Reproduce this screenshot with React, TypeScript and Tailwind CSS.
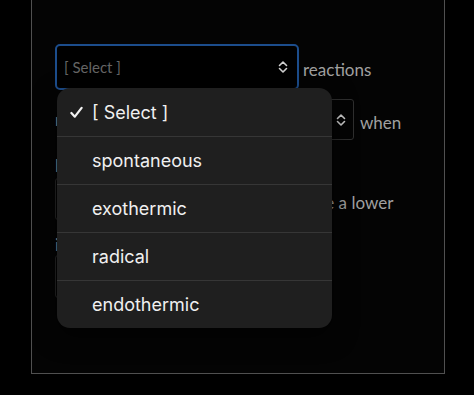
const OPTIONS = ["[ Select ]", "spontaneous", "exothermic", "radical", "endothermic"];

function UpDown({ className = "" }: { className?: string }) {
  return (
    <svg viewBox="0 0 12 14" className={className} fill="none" stroke="currentColor" strokeWidth={1.6} strokeLinecap="round" strokeLinejoin="round">
      <path d="M2.5 5.5 6 2l3.5 3.5" />
      <path d="M2.5 8.5 6 12l3.5-3.5" />
    </svg>
  );
}

function Check() {
  return (
    <svg viewBox="0 0 14 14" className="h-[13px] w-[13px] text-[#f2f2f2]" fill="none" stroke="currentColor" strokeWidth={2.4} strokeLinecap="round" strokeLinejoin="round">
      <path d="M1.5 7.5 5.2 11.5 12.5 2" />
    </svg>
  );
}

export default function App() {
  return (
    <div className="relative h-[395px] w-[474px] overflow-hidden bg-black font-['Lato','Open_Sans',sans-serif] text-[17px] text-[#a0a0a0]">
      {/* quiz panel, top edge is scrolled off */}
      <div className="relative ml-[31px] h-[374px] w-[414px] border-x border-b border-[#505050] bg-[#040404] pl-[23px] pt-[44px]">
        {/* row 1: focused select */}
        <div className="flex h-[46px] items-center">
          <div className="flex h-[46px] w-[244px] items-center justify-between rounded-[5px] border-[2px] border-[#1c4d8c] bg-black pl-[7px] pr-[8px]">
            <span className="text-[15px] text-[#656565]">[ Select ]</span>
            <UpDown className="h-[14px] w-[12px] text-[#d0d0d0]" />
          </div>
          <span className="ml-[4px] mt-[5px]">reactions</span>
        </div>

        {/* row 2 */}
        <div className="mt-[9px] flex h-[41px] items-center">
          <span className="w-[79px] overflow-hidden whitespace-nowrap">rates of</span>
          <div className="flex h-[41px] w-[220px] items-center justify-end rounded-[3px] border border-[#2e2e2e] pr-[6px]">
            <UpDown className="h-[14px] w-[12px] text-[#d0d0d0]" />
          </div>
          <span className="ml-[6px] mt-[7px]">when</span>
        </div>

        {/* row 3 */}
        <div className="mt-[14px] h-[24px] leading-[24px]">less energy is released</div>

        {/* row 4 */}
        <div className="flex h-[42px] items-center">
          <div className="h-[42px] w-[238px] rounded-[3px] border border-[#262626]" />
          <span className="ml-[6px] mt-[8px]">have a lower</span>
        </div>

        {/* row 5 */}
        <div className="mt-[13px] h-[24px] leading-[24px]">in the</div>

        {/* row 6 */}
        <div className="mt-[-2px] h-[43px] w-[238px] rounded-[3px] border border-[#262626]" />

        {/* open dropdown menu */}
        <div className="absolute left-[25px] top-[88px] w-[275px] overflow-hidden rounded-[13px] bg-[#1f1f1f] font-['Inter','Roboto',sans-serif] text-[18px] text-[#f0f0f0] shadow-[0_8px_24px_rgba(0,0,0,0.6)]">
          {OPTIONS.map((opt, i) => (
            <div
              key={opt}
              className={
                i === 0
                  ? "flex h-[48px] items-center pl-[13px]"
                  : "flex h-[48px] items-center border-t border-[#363636] pl-[35px]"
              }
            >
              {i === 0 && (
                <span className="mr-[9px] flex">
                  <Check />
                </span>
              )}
              <span>{opt}</span>
            </div>
          ))}
        </div>
      </div>
    </div>
  );
}
